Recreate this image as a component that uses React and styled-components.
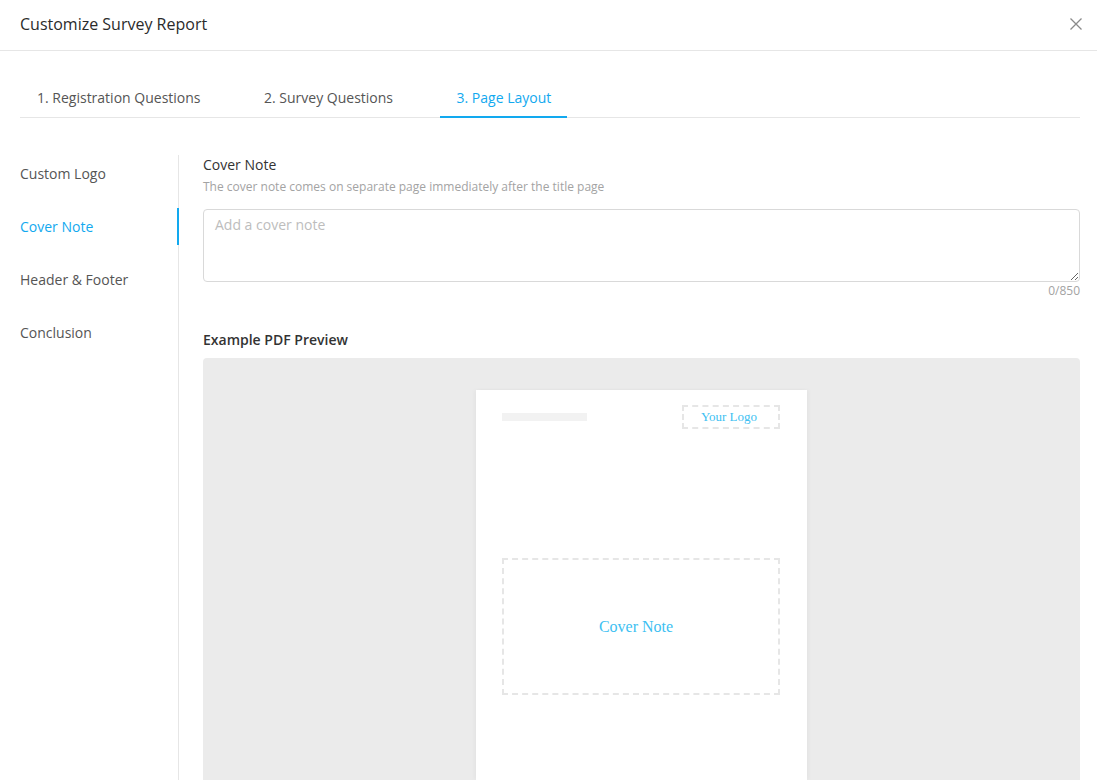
import React, { useState } from 'react';
import styled, { createGlobalStyle } from 'styled-components';

const GlobalStyle = createGlobalStyle`
  html, body {
    margin: 0;
    padding: 0;
    background: #fff;
    font-family: "Open Sans", "Liberation Sans", sans-serif;
    color: #333;
    overflow: hidden;
  }
  * { box-sizing: border-box; }
`;

const BLUE = '#12a9ef';

const Modal = styled.div`
  width: 1097px;
  height: 780px;
  display: flex;
  flex-direction: column;
  overflow: hidden;
`;

const Header = styled.div`
  height: 51px;
  flex-shrink: 0;
  display: flex;
  align-items: center;
  justify-content: space-between;
  padding: 0 10px 2px 20px;
  border-bottom: 1px solid #e6e6e6;
`;

const Title = styled.h1`
  margin: 0;
  font-size: 16px;
  font-weight: 400;
  color: #2b2b2b;
`;

const CloseButton = styled.button`
  border: none;
  background: none;
  padding: 4px;
  cursor: pointer;
  display: flex;
`;

const Body = styled.div`
  flex: 1;
  display: flex;
  flex-direction: column;
  padding: 27px 17px 0 20px;
  min-height: 0;
`;

const TabBar = styled.div`
  display: flex;
  gap: 30.5px;
  border-bottom: 1px solid #e6e6e6;
`;

const Tab = styled.div`
  height: 40px;
  padding: 0 16px 0 17px;
  display: flex;
  align-items: center;
  font-size: 14px;
  color: ${p => (p.$active ? BLUE : '#555')};
  border-bottom: 2px solid ${p => (p.$active ? BLUE : 'transparent')};
  margin-bottom: -1px;
  cursor: pointer;
`;

const Main = styled.div`
  flex: 1;
  display: flex;
  margin-top: 37px;
  min-height: 0;
`;

const Sidebar = styled.nav`
  width: 159px;
  flex-shrink: 0;
  border-right: 1px solid #e6e6e6;
  display: flex;
  flex-direction: column;
  gap: 16px;
`;

const SideItem = styled.div`
  height: 37px;
  display: flex;
  align-items: center;
  font-size: 14px;
  color: ${p => (p.$active ? BLUE : '#555')};
  border-right: 2px solid ${p => (p.$active ? BLUE : 'transparent')};
  margin-right: -1px;
  cursor: pointer;
`;

const Content = styled.section`
  flex: 1;
  padding-left: 24px;
  display: flex;
  flex-direction: column;
  min-height: 0;
`;

const FieldTitle = styled.div`
  font-size: 14px;
  line-height: 20px;
  color: #333;
`;

const Hint = styled.div`
  font-size: 12px;
  line-height: 18px;
  margin-top: 3px;
  color: #a3a3a3;
`;

const TextArea = styled.textarea`
  margin-top: 13px;
  height: 73px;
  width: 100%;
  border: 1px solid #d9d9d9;
  border-radius: 4px;
  padding: 5px 11px;
  font-family: inherit;
  font-size: 14px;
  line-height: 20px;
  color: #333;
  resize: vertical;
  outline: none;
  &::placeholder { color: #bdbdbd; }
`;

const Counter = styled.div`
  text-align: right;
  font-size: 12px;
  line-height: 18px;
  color: #a3a3a3;
`;

const SectionTitle = styled.div`
  margin-top: 30px;
  font-size: 14px;
  font-weight: 600;
  line-height: 20px;
  color: #333;
`;

const Preview = styled.div`
  margin-top: 8px;
  flex: 1;
  background: #ebebeb;
  border-radius: 4px 4px 0 0;
  display: flex;
  justify-content: center;
  padding-top: 32px;
`;

const Page = styled.div`
  width: 331px;
  background: #fff;
  box-shadow: -2px 0 4px rgba(0, 0, 0, 0.03), 2px 0 4px rgba(0, 0, 0, 0.03);
  padding: 15px 27px 0 26px;
  display: flex;
  flex-direction: column;
`;

const PageHeader = styled.div`
  display: flex;
  justify-content: space-between;
  align-items: flex-start;
`;

const HeaderBar = styled.div`
  width: 85px;
  height: 8px;
  margin-top: 8px;
  background: #f2f2f2;
`;

const DashedBox = styled.div`
  border: 2px dashed #e6e6e6;
  display: flex;
  align-items: center;
  justify-content: center;
  font-family: "Liberation Serif", "Times New Roman", serif;
  color: #3dbff2;
  font-size: ${p => p.$size}px;
  width: ${p => p.$width};
  height: ${p => p.$height}px;
  margin-top: ${p => p.$top || 0}px;
  padding-right: ${p => p.$shift || 0}px;
`;

const tabs = ['1. Registration Questions', '2. Survey Questions', '3. Page Layout'];
const sideItems = ['Custom Logo', 'Cover Note', 'Header & Footer', 'Conclusion'];

export default function App() {
  const [note, setNote] = useState('');

  return (
    <>
      <GlobalStyle />
      <Modal>
        <Header>
          <Title>Customize Survey Report</Title>
          <CloseButton aria-label="close">
            <svg width="14" height="14" viewBox="0 0 14 14">
              <path d="M1.5 1.5 L12.5 12.5 M12.5 1.5 L1.5 12.5" stroke="#8a8a8a" strokeWidth="1.3" fill="none" />
            </svg>
          </CloseButton>
        </Header>
        <Body>
          <TabBar>
            {tabs.map((t, i) => (
              <Tab key={t} $active={i === 2}>{t}</Tab>
            ))}
          </TabBar>
          <Main>
            <Sidebar>
              {sideItems.map((s, i) => (
                <SideItem key={s} $active={i === 1}>{s}</SideItem>
              ))}
            </Sidebar>
            <Content>
              <FieldTitle>Cover Note</FieldTitle>
              <Hint>The cover note comes on separate page immediately after the title page</Hint>
              <TextArea
                placeholder="Add a cover note"
                value={note}
                maxLength={850}
                onChange={e => setNote(e.target.value)}
              />
              <Counter>{note.length}/850</Counter>
              <SectionTitle>Example PDF Preview</SectionTitle>
              <Preview>
                <Page>
                  <PageHeader>
                    <HeaderBar />
                    <DashedBox $size={13} $width="98px" $height={24} $shift={4}>Your Logo</DashedBox>
                  </PageHeader>
                  <DashedBox $size={16} $width="100%" $height={137} $top={129} $shift={10}>Cover Note</DashedBox>
                </Page>
              </Preview>
            </Content>
          </Main>
        </Body>
      </Modal>
    </>
  );
}
